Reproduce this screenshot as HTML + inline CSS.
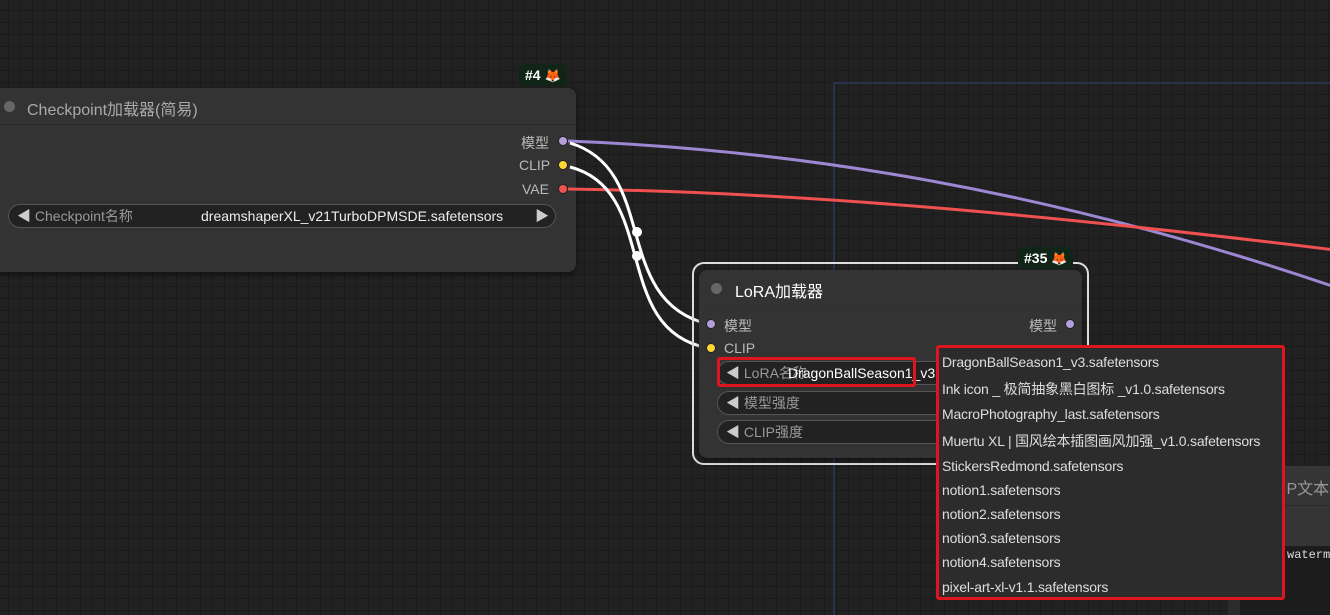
<!DOCTYPE html>
<html><head><meta charset="utf-8"><style>
*{margin:0;padding:0;box-sizing:border-box}
html,body{width:1330px;height:615px;overflow:hidden}
body{position:relative;background-color:#212121;
background-image:linear-gradient(#1a1a1a 1px,transparent 1px),linear-gradient(90deg,#1a1a1a 1px,transparent 1px);
background-size:12px 12px;background-position:-4px -2px;font-family:"Liberation Sans","Noto Sans CJK SC",sans-serif;color:#ccc}
.abs{position:absolute}
.node{position:absolute;background:#333;border-radius:8px;box-shadow:0 2px 6px rgba(0,0,0,.5)}
.dot{position:absolute;width:10px;height:10px;border-radius:50%;border:1px solid #222}
.badge{position:absolute;background:#102418;color:#fff;font-weight:bold;font-size:14px;padding:3px 6px;border-radius:5px;height:22px}
.widget{position:absolute;background:#222;border:1px solid #555;border-radius:12px;height:24px;font-size:14px;color:#999;line-height:22px;padding-left:8px}
.lbl{position:absolute;font-size:14px;color:#bbb}
.menu{position:absolute;left:936px;top:345px;width:349px;height:255px;background:#2c2c2c;border:3px solid #e0141e;border-radius:3px;overflow:hidden}
.menu div{position:absolute;left:3px;font-size:14px;color:#ddd;white-space:nowrap;letter-spacing:-0.2px}
</style></head><body>
<div class="abs" style="left:833px;top:82px;width:497px;height:533px;border-left:2px solid #27334d;border-top:2px solid #27334d"></div>

<!-- right bottom node -->
<div class="abs" style="left:1240px;top:466px;width:90px;height:149px;background:#353535;border-radius:8px 0 0 0"></div>
<div class="abs" style="left:1240px;top:505px;width:90px;height:1px;background:#2a2a2a"></div>
<div class="abs" style="left:1240px;top:546px;width:90px;height:69px;background:#1c1c1c"></div>
<div class="abs" style="left:1282px;top:475px;font-size:16px;color:#999">IP文本</div>
<div class="abs" style="left:1287px;top:548px;font-family:'Liberation Mono',monospace;font-size:12px;color:#ddd">waterm</div>
<div class="abs" style="left:1228px;top:598px;width:12px;height:17px;background:#2c2c2c"></div>

<!-- Checkpoint node -->
<div class="node" style="left:-10px;top:88px;width:586px;height:184px"></div>
<div class="abs" style="left:0;top:124px;width:576px;height:1px;background:#2a2a2a"></div>
<div class="abs" style="left:4px;top:101px;width:11px;height:11px;border-radius:50%;background:#666"></div>
<div class="abs" style="left:27px;top:96px;font-size:16px;color:#aaa">Checkpoint加载器(简易)</div>
<div class="badge" style="left:519px;top:64px">#4 <span style="font-size:13px">🦊</span></div>
<div class="lbl" style="left:521px;top:133px">模型</div>
<div class="lbl" style="left:519px;top:157px">CLIP</div>
<div class="lbl" style="left:522px;top:181px">VAE</div>
<div class="dot" style="left:558px;top:136px;background:#b39ddb"></div>
<div class="dot" style="left:558px;top:160px;background:#fdd835"></div>
<div class="dot" style="left:558px;top:184px;background:#ef5350"></div>
<div class="widget" style="left:8px;top:204px;width:548px"><span style="color:#ccc">◀</span> Checkpoint名称<span style="position:absolute;left:192px;color:#eee">dreamshaperXL_v21TurboDPMSDE.safetensors</span><span style="position:absolute;right:6px;color:#ccc">▶</span></div>

<!-- wires -->
<svg class="abs" style="left:0;top:0" width="1330" height="615">
<path d="M568 141 C 800 150, 1050 190, 1335 287" stroke="#9d87d2" stroke-width="3" fill="none"/>
<path d="M568 189 C 800 192, 1050 215, 1335 250" stroke="#f05050" stroke-width="3" fill="none"/>
<path d="M570 143 C 660 170, 610 300, 708 324" stroke="#fff" stroke-width="3" fill="none"/>
<path d="M570 167 C 660 190, 610 330, 708 348" stroke="#fff" stroke-width="3" fill="none"/>
<circle cx="637" cy="232" r="5" fill="#fff"/>
<circle cx="637" cy="256" r="5" fill="#fff"/>
</svg>

<!-- LoRA node -->
<div class="abs" style="left:692px;top:262px;width:397px;height:203px;border:2px solid #ddd;border-radius:12px"></div>
<div class="node" style="left:699px;top:270px;width:383px;height:188px"></div>
<div class="abs" style="left:699px;top:307px;width:383px;height:1px;background:#2f2f2f"></div>
<div class="abs" style="left:711px;top:283px;width:11px;height:11px;border-radius:50%;background:#666"></div>
<div class="abs" style="left:735px;top:278px;font-size:16px;color:#fff">LoRA加载器</div>
<div class="badge" style="left:1018px;top:247px">#35 <span style="font-size:13px">🦊</span></div>
<div class="dot" style="left:706px;top:319px;background:#b39ddb"></div>
<div class="dot" style="left:706px;top:343px;background:#fdd835"></div>
<div class="lbl" style="left:724px;top:316px">模型</div>
<div class="lbl" style="left:724px;top:340px">CLIP</div>
<div class="lbl" style="left:1029px;top:316px">模型</div>
<div class="dot" style="left:1065px;top:319px;background:#b39ddb"></div>
<div class="widget" style="left:717px;top:361px;width:360px"><span style="color:#ccc">◀</span> LoRA名称<span style="position:absolute;left:70px;color:#fff">DragonBallSeason1_v3</span></div>
<div class="abs" style="left:717px;top:357px;width:199px;height:30px;border:3px solid #e0141e;border-radius:3px"></div>
<div class="widget" style="left:717px;top:391px;width:360px"><span style="color:#ccc">◀</span> 模型强度</div>
<div class="widget" style="left:717px;top:420px;width:360px"><span style="color:#ccc">◀</span> CLIP强度</div>

<div class="menu">
<div style="top:6px">DragonBallSeason1_v3.safetensors</div>
<div style="top:31px">Ink icon _ 极简抽象黑白图标 _v1.0.safetensors</div>
<div style="top:58px">MacroPhotography_last.safetensors</div>
<div style="top:83px">Muertu XL | 国风绘本插图画风加强_v1.0.safetensors</div>
<div style="top:110px">StickersRedmond.safetensors</div>
<div style="top:134px">notion1.safetensors</div>
<div style="top:158px">notion2.safetensors</div>
<div style="top:182px">notion3.safetensors</div>
<div style="top:206px">notion4.safetensors</div>
<div style="top:231px">pixel-art-xl-v1.1.safetensors</div>
</div>
</body></html>
